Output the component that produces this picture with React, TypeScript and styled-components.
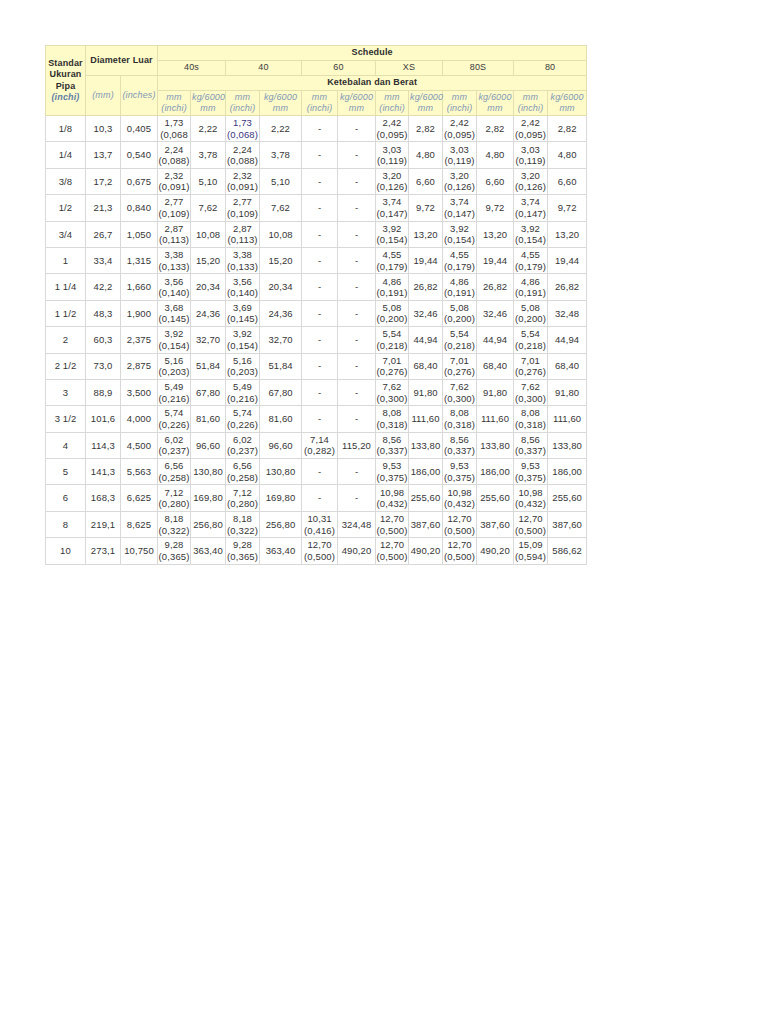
import React from 'react';
import styled, { createGlobalStyle } from 'styled-components';

type Cell = string | [string, string];

interface PipeRow {
  size: string;
  mm: string;
  inches: string;
  cells: Cell[];
}

const dash = '-';

// Same thickness/weight repeated for XS, 80S and 80
const triple = (t: [string, string], kg: string): Cell[] => [t, kg, t, kg, t, kg];

const rows: PipeRow[] = [
  { size: '1/8', mm: '10,3', inches: '0,405', cells: [['1,73', '(0,068'], '2,22', ['1,73', '(0,068)'], '2,22', dash, dash, ...triple(['2,42', '(0,095)'], '2,82')] },
  { size: '1/4', mm: '13,7', inches: '0,540', cells: [['2,24', '(0,088)'], '3,78', ['2,24', '(0,088)'], '3,78', dash, dash, ...triple(['3,03', '(0,119)'], '4,80')] },
  { size: '3/8', mm: '17,2', inches: '0,675', cells: [['2,32', '(0,091)'], '5,10', ['2,32', '(0,091)'], '5,10', dash, dash, ...triple(['3,20', '(0,126)'], '6,60')] },
  { size: '1/2', mm: '21,3', inches: '0,840', cells: [['2,77', '(0,109)'], '7,62', ['2,77', '(0,109)'], '7,62', dash, dash, ...triple(['3,74', '(0,147)'], '9,72')] },
  { size: '3/4', mm: '26,7', inches: '1,050', cells: [['2,87', '(0,113)'], '10,08', ['2,87', '(0,113)'], '10,08', dash, dash, ...triple(['3,92', '(0,154)'], '13,20')] },
  { size: '1', mm: '33,4', inches: '1,315', cells: [['3,38', '(0,133)'], '15,20', ['3,38', '(0,133)'], '15,20', dash, dash, ...triple(['4,55', '(0,179)'], '19,44')] },
  { size: '1 1/4', mm: '42,2', inches: '1,660', cells: [['3,56', '(0,140)'], '20,34', ['3,56', '(0,140)'], '20,34', dash, dash, ...triple(['4,86', '(0,191)'], '26,82')] },
  { size: '1 1/2', mm: '48,3', inches: '1,900', cells: [['3,68', '(0,145)'], '24,36', ['3,69', '(0,145)'], '24,36', dash, dash, ['5,08', '(0,200)'], '32,46', ['5,08', '(0,200)'], '32,46', ['5,08', '(0,200)'], '32,48'] },
  { size: '2', mm: '60,3', inches: '2,375', cells: [['3,92', '(0,154)'], '32,70', ['3,92', '(0,154)'], '32,70', dash, dash, ...triple(['5,54', '(0,218)'], '44,94')] },
  { size: '2 1/2', mm: '73,0', inches: '2,875', cells: [['5,16', '(0,203)'], '51,84', ['5,16', '(0,203)'], '51,84', dash, dash, ...triple(['7,01', '(0,276)'], '68,40')] },
  { size: '3', mm: '88,9', inches: '3,500', cells: [['5,49', '(0,216)'], '67,80', ['5,49', '(0,216)'], '67,80', dash, dash, ...triple(['7,62', '(0,300)'], '91,80')] },
  { size: '3 1/2', mm: '101,6', inches: '4,000', cells: [['5,74', '(0,226)'], '81,60', ['5,74', '(0,226)'], '81,60', dash, dash, ...triple(['8,08', '(0,318)'], '111,60')] },
  { size: '4', mm: '114,3', inches: '4,500', cells: [['6,02', '(0,237)'], '96,60', ['6,02', '(0,237)'], '96,60', ['7,14', '(0,282)'], '115,20', ...triple(['8,56', '(0,337)'], '133,80')] },
  { size: '5', mm: '141,3', inches: '5,563', cells: [['6,56', '(0,258)'], '130,80', ['6,56', '(0,258)'], '130,80', dash, dash, ...triple(['9,53', '(0,375)'], '186,00')] },
  { size: '6', mm: '168,3', inches: '6,625', cells: [['7,12', '(0,280)'], '169,80', ['7,12', '(0,280)'], '169,80', dash, dash, ...triple(['10,98', '(0,432)'], '255,60')] },
  { size: '8', mm: '219,1', inches: '8,625', cells: [['8,18', '(0,322)'], '256,80', ['8,18', '(0,322)'], '256,80', ['10,31', '(0,416)'], '324,48', ...triple(['12,70', '(0,500)'], '387,60')] },
  { size: '10', mm: '273,1', inches: '10,750', cells: [['9,28', '(0,365)'], '363,40', ['9,28', '(0,365)'], '363,40', ['12,70', '(0,500)'], '490,20', ['12,70', '(0,500)'], '490,20', ['12,70', '(0,500)'], '490,20', ['15,09', '(0,594)'], '586,62'] },
];

const schedules = ['40s', '40', '60', 'XS', '80S', '80'];
const colWidths = [40, 35, 37, 33, 35, 34, 42, 36, 38, 33, 34, 34, 37, 34, 39];

const App: React.FC = () => {
  return (
    <Page>
      <GlobalStyle />
      <Table>
        <colgroup>
          {colWidths.map((w, i) => (
            <col key={i} style={{ width: w }} />
          ))}
        </colgroup>
        <thead>
          <HeadRow $h={15}>
            <Head rowSpan={4} $bold>
              Standar
              <br />
              Ukuran
              <br />
              Pipa
              <br />
              <Unit $bold>(inchi)</Unit>
            </Head>
            <Head colSpan={2} rowSpan={2} $bold>Diameter Luar</Head>
            <Head colSpan={12} $bold>Schedule</Head>
          </HeadRow>
          <HeadRow $h={15}>
            {schedules.map((s) => (
              <Head key={s} colSpan={2}>{s}</Head>
            ))}
          </HeadRow>
          <HeadRow $h={15}>
            <Head rowSpan={2}><Unit>(mm)</Unit></Head>
            <Head rowSpan={2}><Unit>(inches)</Unit></Head>
            <Head colSpan={12} $bold>Ketebalan dan Berat</Head>
          </HeadRow>
          <HeadRow $h={25}>
            {schedules.map((s) => (
              <React.Fragment key={s}>
                <Head><Unit>mm<br />(inchi)</Unit></Head>
                <Head><Unit>kg/6000<br />mm</Unit></Head>
              </React.Fragment>
            ))}
          </HeadRow>
        </thead>
        <tbody>
          {rows.map((r) => (
            <BodyRow key={r.size}>
              <Data>{r.size}</Data>
              <Data>{r.mm}</Data>
              <Data>{r.inches}</Data>
              {r.cells.map((c, i) => (
                <Data key={i} $visited={r.size === '1/8' && i === 2}>
                  {Array.isArray(c) ? (
                    <>
                      {c[0]}
                      <br />
                      {c[1]}
                    </>
                  ) : (
                    c
                  )}
                </Data>
              ))}
            </BodyRow>
          ))}
        </tbody>
      </Table>
    </Page>
  );
};

export default App;

//#region styled-components
const GlobalStyle = createGlobalStyle`
  html, body {
    margin: 0;
    background: #ffffff;
  }
`;

const Page = styled.div`
  width: 768px;
  min-height: 1024px;
  padding: 45px 0 0 45px;
  box-sizing: border-box;
  background: #ffffff;
  font-family: "Liberation Sans", Arial, sans-serif;
`;

const Table = styled.table`
  table-layout: fixed;
  width: 542px;
  border-collapse: collapse;
  border: 1px solid #d4d4d4;
`;

const HeadRow = styled.tr<{ $h: number }>`
  height: ${(p) => p.$h}px;
`;

const Head = styled.th<{ $bold?: boolean }>`
  background: #fffbc9;
  border: 1px solid #e4dfae;
  padding: 0 1px;
  font-size: 9px;
  line-height: 11.5px;
  font-weight: ${(p) => (p.$bold ? 700 : 400)};
  color: ${(p) => (p.$bold ? '#2e2e2e' : '#3a3a3a')};
  text-align: center;
  vertical-align: middle;
  letter-spacing: 0.15px;
`;

const Unit = styled.span<{ $bold?: boolean }>`
  font-style: italic;
  font-weight: ${(p) => (p.$bold ? 700 : 400)};
  color: ${(p) => (p.$bold ? '#5e80a8' : '#8199b6')};
`;

const BodyRow = styled.tr`
  height: 26.4px;
`;

const Data = styled.td<{ $visited?: boolean }>`
  border: 1px solid #d9d9d9;
  padding: 0;
  font-family: "Liberation Sans Narrow", "Liberation Sans", Arial, sans-serif;
  font-size: 9.5px;
  line-height: 11.5px;
  letter-spacing: 0.1px;
  color: ${(p) => (p.$visited ? '#3b3580' : '#363636')};
  text-align: center;
  vertical-align: middle;
  white-space: nowrap;
`;
//#endregion
